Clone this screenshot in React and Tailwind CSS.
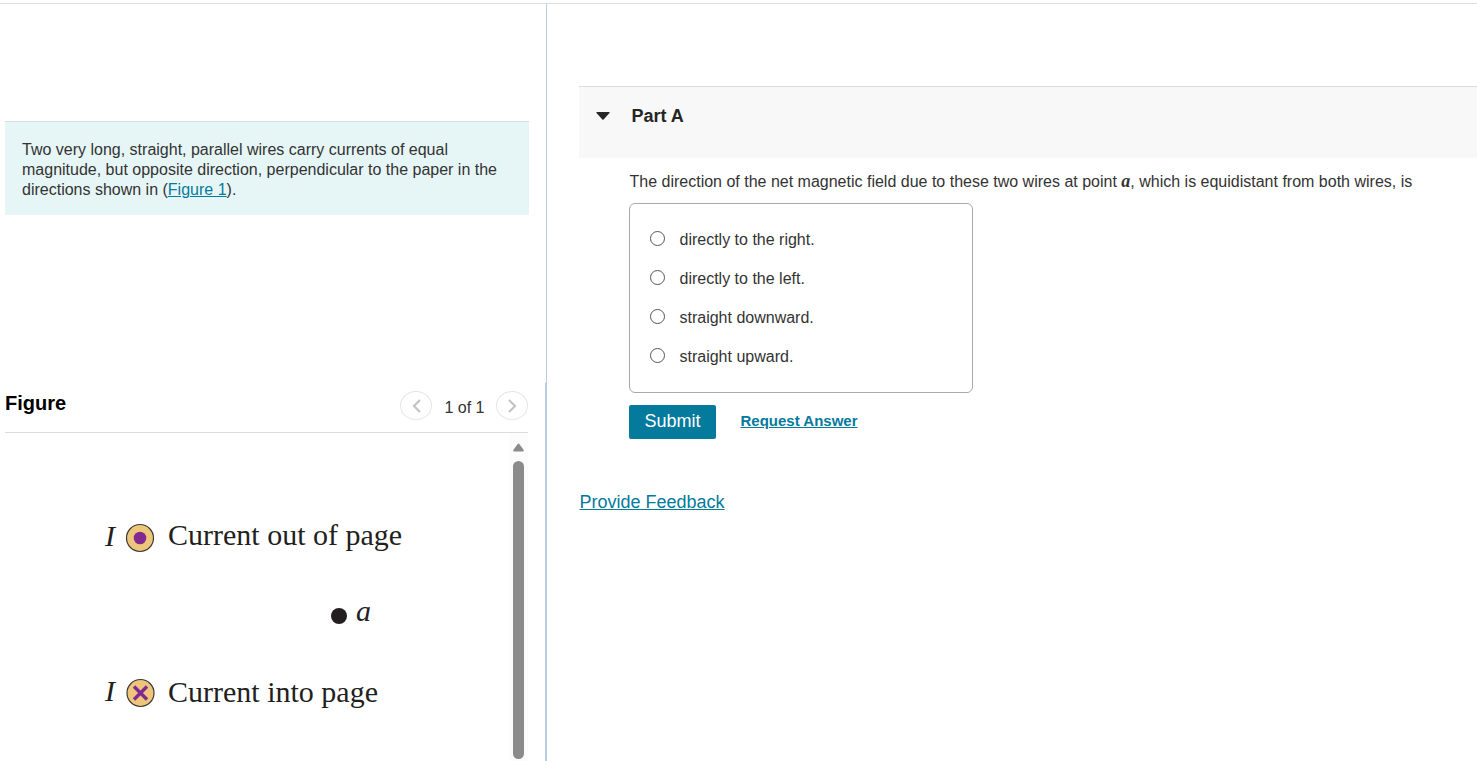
import { useState } from 'react';

const answers = [
  { value: 'right', label: 'directly to the right.' },
  { value: 'left', label: 'directly to the left.' },
  { value: 'down', label: 'straight downward.' },
  { value: 'up', label: 'straight upward.' }
];

const Chevron = ({ d }) => (
  <svg width="11" height="14" viewBox="0 0 11 14" fill="none" stroke="#c4c4c4" strokeWidth="2.2" aria-hidden="true">
    <path d={d} />
  </svg>
);

const PagerButton = ({ label, d }) => (
  <button
    type="button"
    aria-label={label}
    className="flex h-[29px] w-8 items-center justify-center rounded-[50%] border border-[#e6e6e6] bg-white"
  >
    <Chevron d={d} />
  </button>
);

const WiresDiagram = () => (
  <svg
    width="420"
    height="328"
    viewBox="0 0 420 328"
    role="img"
    aria-label="Two parallel wires and point a"
    className="font-['Liberation_Serif',serif]"
    fill="#231f20"
    fontSize="30"
  >
    {/* Upper wire, current out of the page */}
    <text x="100" y="113" fontStyle="italic">I</text>
    <circle cx="135" cy="105" r="13.5" fill="#edc67c" stroke="#3d3a33" strokeWidth="1.2" />
    <circle cx="135" cy="105" r="6.3" fill="#812990" />
    <text x="163" y="112">Current out of page</text>

    {/* Point a */}
    <circle cx="334" cy="183" r="8" />
    <text x="351" y="188" fontStyle="italic">a</text>

    {/* Lower wire, current into the page */}
    <text x="100" y="268" fontStyle="italic">I</text>
    <circle cx="135.5" cy="260" r="13.5" fill="#edc67c" stroke="#3d3a33" strokeWidth="1.2" />
    <path d="M129 253.5l13 13M142 253.5l-13 13" stroke="#812990" strokeWidth="3.4" />
    <text x="163" y="269">Current into page</text>
  </svg>
);

const FigurePanel = () => (
  <section id="figure" className="flex flex-1 flex-col border-r-2 border-[#b9cde0] pl-[5px] pr-[17px]">
    <div className="flex h-[50px] items-start justify-between border-b border-[#dcdcdc] pt-2">
      <h2 className="text-xl leading-6 font-bold text-black">Figure</h2>
      <div className="flex items-center gap-3">
        <PagerButton label="Previous figure" d="M9 1L3 7l6 6" />
        <span className="pt-1">1 of 1</span>
        <PagerButton label="Next figure" d="M2 1l6 6-6 6" />
      </div>
    </div>

    <div className="flex flex-1">
      <div className="flex-1">
        <WiresDiagram />
      </div>
      <div className="flex w-[19px] flex-col items-center bg-[#fcfcfc] pt-[10px] pb-0.5">
        <svg width="11" height="9" viewBox="0 0 11 9" fill="#8b8b8b" aria-hidden="true">
          <path d="M4.7 .9Q5.5 0 6.3 .9L10.7 7Q11 8.5 10 8.6H1Q0 8.5 .3 7z" />
        </svg>
        <div className="mt-[9px] w-[11px] flex-1 rounded-full bg-[#8b8b8b]" />
      </div>
    </div>
  </section>
);

const App = () => {
  const [selected, setSelected] = useState(null);

  return (
    <div className="flex min-h-screen flex-col bg-white pt-[3px] font-['Liberation_Sans',Arial,sans-serif] text-base leading-5 text-[#333]">
      <div className="flex flex-1 border-t border-[#dcdfe2]">
        <aside className="flex w-[calc(37%+1px)] flex-col">
          {/* Problem statement */}
          <div className="h-[379px] border-r border-[#b9cde0] pt-[117px] pl-[5px] pr-[17px]">
            <div className="border-t border-[#d3dfe1] bg-[#e6f6f6] px-[17px] pt-[18px] pb-[15px]">
              <p>
                Two very long, straight, parallel wires carry currents of equal magnitude, but opposite
                direction, perpendicular to the paper in the directions shown in (
                <a href="#figure" className="text-[#047a9c] underline">Figure 1</a>).
              </p>
            </div>
          </div>
          <FigurePanel />
        </aside>

        <main className="flex-1 pt-[82px] pl-8">
          <header className="h-[72px] border-t border-[#dcdcdc] bg-[#f8f8f8] pt-[19px] pl-[17px]">
            <h2>
              <button type="button" aria-expanded="true" className="flex items-center gap-[21px] text-lg leading-5 font-bold text-[#252525]">
                <svg width="14" height="8" viewBox="0 0 14 8" fill="#252525" aria-hidden="true">
                  <path d="M1 0h12q1 .2 .5 1L7.6 7.4q-.6 .6-1.2 0L.5 1Q0 .2 1 0z" />
                </svg>
                Part A
              </button>
            </h2>
          </header>

          <form className="pt-[13px] pl-[50px]" onSubmit={(e) => e.preventDefault()}>
            <p>
              The direction of the net magnetic field due to these two wires at point{' '}
              <b className="font-['Liberation_Serif',serif] text-lg leading-5 italic">a</b>, which is
              equidistant from both wires, is
            </p>

            <div className="mt-[11px] max-w-[344px] rounded-md border border-[#a9a9a9] pt-4 pb-4 pl-5">
              {answers.map((answer) => (
                <label key={answer.value} className="flex h-[39px] items-center gap-[14px]">
                  <input
                    type="radio"
                    name="direction"
                    value={answer.value}
                    checked={selected === answer.value}
                    onChange={() => setSelected(answer.value)}
                    className="mb-[3px] size-[15px] appearance-none rounded-full border border-[#555] bg-white checked:border-4 checked:border-[#047a9c]"
                  />
                  {answer.label}
                </label>
              ))}
            </div>

            <div className="mt-3 flex items-center gap-[25px]">
              <button type="submit" className="h-[34px] rounded-xs bg-[#047a9c] px-[15px] pb-0.5 text-lg leading-5 text-white">
                Submit
              </button>
              <a href="#answer" className="pb-0.5 text-[15px] font-bold text-[#047a9c] underline">
                Request Answer
              </a>
            </div>
          </form>

          <a href="#feedback" className="mt-[53px] inline-block text-lg leading-5 text-[#047a9c] underline">
            Provide Feedback
          </a>
        </main>
      </div>
    </div>
  );
};

export default App;
